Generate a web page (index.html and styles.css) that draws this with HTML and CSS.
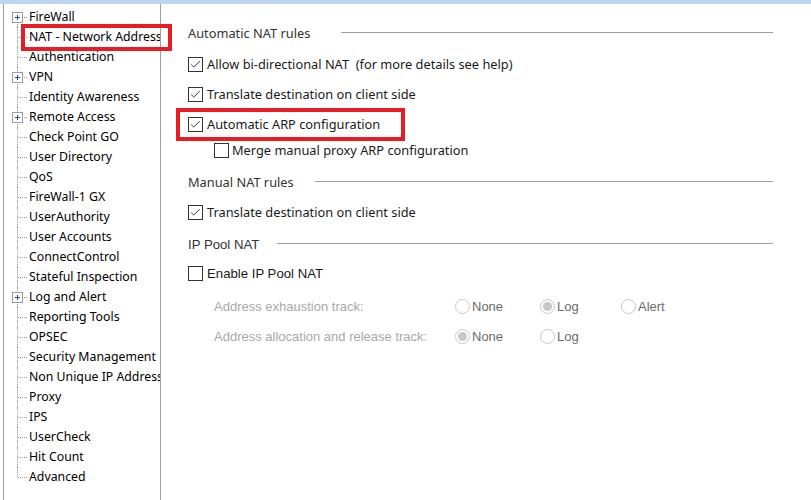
FILE: index.html
```html
<!DOCTYPE html>
<html>
<head>
<meta charset="utf-8">
<link rel="stylesheet" href="styles.css">
</head>
<body>
<div class="topbar"></div>
<div class="main">
  <div class="tree">
    <ul class="nodes">
      <li class="node"><span class="plus"></span>FireWall</li>
      <li class="node selected">NAT - Network Address Translation</li>
      <li class="node">Authentication</li>
      <li class="node"><span class="plus"></span>VPN</li>
      <li class="node">Identity Awareness</li>
      <li class="node"><span class="plus"></span>Remote Access</li>
      <li class="node">Check Point GO</li>
      <li class="node">User Directory</li>
      <li class="node">QoS</li>
      <li class="node">FireWall-1 GX</li>
      <li class="node">UserAuthority</li>
      <li class="node">User Accounts</li>
      <li class="node">ConnectControl</li>
      <li class="node">Stateful Inspection</li>
      <li class="node"><span class="plus"></span>Log and Alert</li>
      <li class="node">Reporting Tools</li>
      <li class="node">OPSEC</li>
      <li class="node">Security Management</li>
      <li class="node">Non Unique IP Address Ranges</li>
      <li class="node">Proxy</li>
      <li class="node">IPS</li>
      <li class="node">UserCheck</li>
      <li class="node">Hit Count</li>
      <li class="node last">Advanced</li>
    </ul>
  </div>
  <div class="content">
    <div class="section first"><span class="section-title">Automatic NAT rules</span><span class="rule"></span></div>
    <div class="cb-row r1"><span class="box checked"><svg viewBox="0 0 15 15"><polyline points="2.5,7.5 5.5,10.5 12.5,3.5"/></svg></span><span class="label">Allow bi-directional NAT&nbsp; (for more details see help)</span></div>
    <div class="cb-row r2"><span class="box checked"><svg viewBox="0 0 15 15"><polyline points="2.5,7.5 5.5,10.5 12.5,3.5"/></svg></span><span class="label">Translate destination on client side</span></div>
    <div class="cb-row r2"><span class="box checked"><svg viewBox="0 0 15 15"><polyline points="2.5,7.5 5.5,10.5 12.5,3.5"/></svg></span><span class="label">Automatic ARP configuration</span></div>
    <div class="cb-row r3 indent"><span class="box"></span><span class="label">Merge manual proxy ARP configuration</span></div>
    <div class="section s2 manual"><span class="section-title">Manual NAT rules</span><span class="rule"></span></div>
    <div class="cb-row r2"><span class="box checked"><svg viewBox="0 0 15 15"><polyline points="2.5,7.5 5.5,10.5 12.5,3.5"/></svg></span><span class="label">Translate destination on client side</span></div>
    <div class="section s2 classic"><span class="section-title">IP Pool NAT</span><span class="rule"></span></div>
    <div class="cb-row r4 classic"><span class="box"></span><span class="label">Enable IP Pool NAT</span></div>
    <div class="radio-row r5">
      <span class="rlabel">Address exhaustion track:</span>
      <span class="radio-opt"><span class="radio"></span>None</span>
      <span class="radio-opt"><span class="radio on"></span>Log</span>
      <span class="radio-opt"><span class="radio"></span>Alert</span>
    </div>
    <div class="radio-row r2">
      <span class="rlabel">Address allocation and release track:</span>
      <span class="radio-opt"><span class="radio on"></span>None</span>
      <span class="radio-opt"><span class="radio"></span>Log</span>
    </div>
  </div>
</div>
<div class="mark mark-nat"></div>
<div class="mark mark-arp"></div>
</body>
</html>
```
FILE: styles.css
```css
html, body {
  margin: 0;
  padding: 0;
  background: #ffffff;
}
body {
  width: 811px;
  height: 500px;
  overflow: hidden;
  position: relative;
  font-family: "Noto Sans", "Open Sans", sans-serif;
  color: #1a1a1a;
}
.topbar {
  height: 4px;
  background: #bcd4ec;
}
.main {
  display: flex;
  height: 496px;
}
.tree {
  margin-left: 3px;
  width: 156px;
  border-left: 1px solid #a0a0a0;
  border-right: 1px solid #a0a0a0;
  overflow: hidden;
  flex: none;
}
.nodes {
  list-style: none;
  margin: 0;
  padding: 3px 0 0 0;
  position: relative;
}
.node {
  position: relative;
  height: 20px;
  line-height: 20px;
  padding-left: 25px;
  font-size: 12.3px;
  white-space: nowrap;
  color: #000;
}
.node::before {
  content: "";
  position: absolute;
  left: 13px;
  top: 0;
  height: 20px;
  border-left: 1px dotted #9a9a9a;
}
.node:first-child::before {
  top: 10px;
  height: 10px;
}
.node.last::before {
  height: 10px;
}
.node::after {
  content: "";
  position: absolute;
  left: 14px;
  top: 10px;
  width: 9px;
  border-top: 1px dotted #9a9a9a;
}
.plus {
  position: absolute;
  left: 8px;
  top: 5px;
  width: 9px;
  height: 9px;
  border: 1px solid #9a9a9a;
  background: #fff;
  z-index: 1;
}
.plus::before, .plus::after {
  content: "";
  position: absolute;
  background: #1f4e96;
}
.plus::before {
  left: 2px;
  top: 4px;
  width: 5px;
  height: 1px;
}
.plus::after {
  left: 4px;
  top: 2px;
  width: 1px;
  height: 5px;
}
.content {
  flex: 1;
  padding: 19px 38px 0 27px;
  font-size: 12.8px;
}
.section {
  display: flex;
  align-items: center;
  height: 20px;
  color: #333;
}
.section.s2 {
  margin-top: 12px;
}
.section-title {
  white-space: nowrap;
  margin-right: 10px;
}
.rule {
  flex: 1;
  height: 1px;
  background: #a0a0a0;
  margin-top: -1px;
}
.first .section-title { margin-right: 31px; }
.manual .section-title { margin-right: 21px; }
.classic .section-title { margin-right: 18px; }
.cb-row {
  display: flex;
  align-items: center;
  height: 20px;
  white-space: nowrap;
}
.r1 { margin-top: 11px; }
.r2 { margin-top: 10px; }
.r3 { margin-top: 6px; }
.r4 { margin-top: 9px; }
.r5 { margin-top: 13px; }
.indent { padding-left: 26px; }
.box {
  box-sizing: border-box;
  width: 15px;
  height: 15px;
  border: 1px solid #333;
  background: #fff;
  margin-right: 4px;
  flex: none;
  display: flex;
}
.box svg {
  width: 13px;
  height: 13px;
  fill: none;
  stroke: #333;
  stroke-width: 1.1;
}
.indent .box { margin-right: 3px; }
.classic {
  font-family: "Liberation Sans", Arial, sans-serif;
  font-size: 13.2px;
}
.radio-row {
  display: grid;
  grid-template-columns: 241px 85px 81px auto;
  align-items: center;
  height: 20px;
  padding-left: 26px;
  font-family: "Liberation Sans", Arial, sans-serif;
  font-size: 13px;
  white-space: nowrap;
}
.rlabel {
  color: #a8a8a8;
}
.radio-opt {
  display: flex;
  align-items: center;
  color: #6a6a6a;
}
.radio {
  box-sizing: border-box;
  width: 15px;
  height: 15px;
  border: 1px solid #c8c8c8;
  border-radius: 50%;
  margin-right: 2px;
  display: flex;
  align-items: center;
  justify-content: center;
  flex: none;
}
.radio.on::after {
  content: "";
  width: 9px;
  height: 9px;
  border-radius: 50%;
  background: #c8c8c8;
}
.mark {
  position: absolute;
  border: 4px solid #e81c24;
  box-sizing: border-box;
}
.mark-nat {
  left: 21px;
  top: 24px;
  width: 151px;
  height: 27px;
}
.mark-arp {
  left: 176px;
  top: 108px;
  width: 229px;
  height: 33px;
}
```
